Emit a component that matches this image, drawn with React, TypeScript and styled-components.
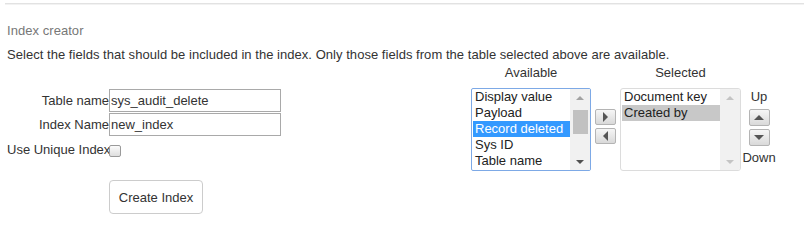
import React from "react";
import styled, { createGlobalStyle } from "styled-components";

const Global = createGlobalStyle`
  html, body { margin: 0; padding: 0; background: #fff; }
  body { font-family: "Liberation Sans", Arial, Helvetica, sans-serif; font-size: 13px; color: #333; }
`;

const Rule = styled.div`
  margin: 3px 0 0 5px;
  border-top: 1px solid #e2e2e2;
  border-bottom: 1px solid #f2f2f2;
`;

const Panel = styled.div`
  padding: 18px 0 0 7px;
`;

const Title = styled.div`
  color: #777;
  line-height: 16px;
  letter-spacing: 0.05px;
`;

const Desc = styled.div`
  margin-top: 8px;
  line-height: 16px;
  letter-spacing: 0.04px;
`;

const Main = styled.div`
  display: flex;
  margin-top: 2px;
`;

const Left = styled.div`
  width: 464px;
  padding-top: 24px;
`;

const FormGrid = styled.div`
  display: grid;
  grid-template-columns: 102px 172px;
  row-gap: 1px;
  align-items: center;
`;

const Label = styled.label`
  text-align: right;
  line-height: 16px;
  white-space: nowrap;
`;

const TextInput = styled.input`
  box-sizing: border-box;
  height: 23px;
  width: 172px;
  margin: 0;
  padding: 0 1px;
  border: 1px solid #a9a9a9;
  font-family: inherit;
  font-size: 13px;
  color: #333;
  outline: none;
`;

const CheckCell = styled.div`
  display: flex;
  align-items: flex-end;
  height: 21px;
`;

const Check = styled.span`
  display: block;
  box-sizing: border-box;
  width: 12px;
  height: 12px;
  margin-bottom: 1px;
  border: 1px solid #9a9a9a;
  border-radius: 2px;
  background: linear-gradient(#fbfbfb, #dedede);
`;

const CheckLabel = styled(Label)`
  align-self: end;
`;

const Button = styled.button`
  box-sizing: border-box;
  margin: 22px 0 0 102px;
  width: 94px;
  height: 34px;
  border: 1px solid #ccc;
  border-radius: 4px;
  background: #fff;
  font-family: inherit;
  font-size: 13px;
  color: #333;
  padding: 0;
`;

const Bucket = styled.div`
  display: grid;
  grid-template-columns: 120px 29px 121px 33px;
  grid-template-rows: 23px 83px;
`;

const Head = styled.div<{ $col: number }>`
  grid-row: 1;
  grid-column: ${(p) => p.$col};
  text-align: center;
  line-height: 16px;
`;

const List = styled.div<{ $focus?: boolean; $col: number }>`
  grid-row: 2;
  grid-column: ${(p) => p.$col};
  box-sizing: border-box;
  height: 83px;
  border: 1px solid ${(p) => (p.$focus ? "#7da9e6" : "#dcdcdc")};
  border-radius: ${(p) => (p.$focus ? "2px" : "3px")};
  display: flex;
  overflow: hidden;
`;

const Items = styled.div`
  flex: 1;
  padding-left: 1px;
  min-width: 0;
`;

const Item = styled.div<{ $sel?: "blue" | "gray" }>`
  height: 16px;
  line-height: 16px;
  padding-left: 2px;
  white-space: nowrap;
  color: ${(p) => (p.$sel === "blue" ? "#fff" : "#222")};
  background: ${(p) =>
    p.$sel === "blue" ? "#3399ff" : p.$sel === "gray" ? "#c8c8c8" : "transparent"};
`;

const Scroll = styled.div`
  width: 20px;
  flex: none;
  background: #f1f1f1;
  display: flex;
  flex-direction: column;
  align-items: center;
`;

const ScrollArrow = styled.div<{ $dir: "up" | "down"; $dim?: boolean }>`
  height: 17px;
  width: 17px;
  display: flex;
  align-items: center;
  justify-content: center;
  &::after {
    content: "";
    border-left: 4px solid transparent;
    border-right: 4px solid transparent;
    ${(p) =>
      p.$dir === "up"
        ? `border-bottom: 4px solid ${p.$dim ? "#c4c4c4" : "#a3a3a3"};`
        : `border-top: 4px solid ${p.$dim ? "#c4c4c4" : "#505050"};`}
  }
`;

const Track = styled.div`
  flex: 1;
  width: 100%;
  display: flex;
  justify-content: center;
  padding-top: 4px;
`;

const Thumb = styled.div`
  width: 15px;
  height: 24px;
  background: #c1c1c1;
`;

const Arrows = styled.div`
  grid-row: 2;
  grid-column: 2;
  display: flex;
  flex-direction: column;
  align-items: center;
  gap: 3px;
  padding-top: 21px;
`;

const ArrowBtn = styled.div<{ $dir: "left" | "right" | "up" | "down"; $h?: number }>`
  box-sizing: border-box;
  width: 21px;
  height: ${(p) => p.$h ?? 16}px;
  border: 1px solid #b4b4b4;
  border-radius: 2px;
  background: linear-gradient(#f6f6f6, #d9d9d9);
  display: flex;
  align-items: center;
  justify-content: center;
  &::after {
    content: "";
    ${(p) =>
      p.$dir === "right"
        ? `border-top:5px solid transparent;border-bottom:5px solid transparent;border-left:5px solid #555;`
        : p.$dir === "left"
        ? `border-top:5px solid transparent;border-bottom:5px solid transparent;border-right:5px solid #555;`
        : p.$dir === "up"
        ? `border-left:5px solid transparent;border-right:5px solid transparent;border-bottom:5px solid #555;`
        : `border-left:5px solid transparent;border-right:5px solid transparent;border-top:5px solid #555;`}
  }
`;

const Order = styled.div`
  grid-row: 2;
  grid-column: 4;
  display: flex;
  flex-direction: column;
  align-items: center;
  padding: 1px 0 0 3px;
`;

const OrderText = styled.div`
  line-height: 16px;
`;

const OrderBtns = styled.div`
  display: flex;
  flex-direction: column;
  gap: 3px;
  margin: 4px 0 4px;
`;

export default function App() {
  return (
    <>
      <Global />
      <Rule />
      <Panel>
        <Title>Index creator</Title>
        <Desc>
          Select the fields that should be included in the index. Only those fields from the table
          selected above are available.
        </Desc>
        <Main>
          <Left>
            <FormGrid>
              <Label>Table name</Label>
              <TextInput defaultValue="sys_audit_delete" />
              <Label>Index Name</Label>
              <TextInput defaultValue="new_index" />
              <CheckLabel>Use Unique Index</CheckLabel>
              <CheckCell>
                <Check />
              </CheckCell>
            </FormGrid>
            <Button>Create Index</Button>
          </Left>
          <Bucket>
            <Head $col={1}>Available</Head>
            <Head $col={3}>Selected</Head>
            <List $focus $col={1}>
              <Items>
                <Item>Display value</Item>
                <Item>Payload</Item>
                <Item $sel="blue">Record deleted</Item>
                <Item>Sys ID</Item>
                <Item>Table name</Item>
              </Items>
              <Scroll>
                <ScrollArrow $dir="up" />
                <Track>
                  <Thumb />
                </Track>
                <ScrollArrow $dir="down" />
              </Scroll>
            </List>
            <Arrows>
              <ArrowBtn $dir="right" />
              <ArrowBtn $dir="left" />
            </Arrows>
            <List $col={3}>
              <Items>
                <Item>Document key</Item>
                <Item $sel="gray">Created by</Item>
              </Items>
              <Scroll>
                <ScrollArrow $dir="up" $dim />
                <Track />
                <ScrollArrow $dir="down" $dim />
              </Scroll>
            </List>
            <Order>
              <OrderText>Up</OrderText>
              <OrderBtns>
                <ArrowBtn $dir="up" $h={17} />
                <ArrowBtn $dir="down" $h={17} />
              </OrderBtns>
              <OrderText>Down</OrderText>
            </Order>
          </Bucket>
        </Main>
      </Panel>
    </>
  );
}
